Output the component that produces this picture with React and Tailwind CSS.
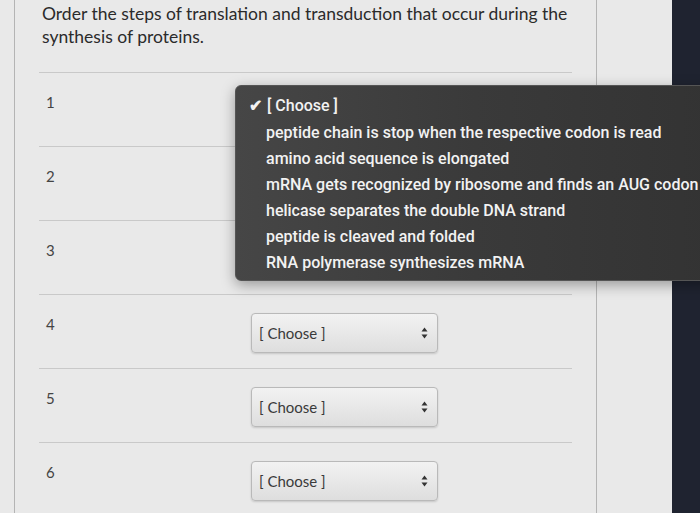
import { useState } from "react"

const options = [
  "peptide chain is stop when the respective codon is read",
  "amino acid sequence is elongated",
  "mRNA gets recognized by ribosome and finds an AUG codon",
  "helicase separates the double DNA strand",
  "peptide is cleaved and folded",
  "RNA polymerase synthesizes mRNA",
]

function Arrows() {
  return (
    <svg width="7" height="12" viewBox="0 0 7 12" className="text-[#333]">
      <path d="M3.5 0.5 L6.5 4.5 L0.5 4.5 Z" fill="currentColor" />
      <path d="M3.5 11.5 L6.5 7.5 L0.5 7.5 Z" fill="currentColor" />
    </svg>
  )
}

function Select() {
  return (
    <div className="w-[187px] h-[40px] rounded-[4px] border border-[#b9b9b9] bg-gradient-to-b from-[#f2f2f2] to-[#dedede] shadow-[0_1px_2px_rgba(0,0,0,0.15)] flex items-center justify-between pl-[7px] pr-[9px]">
      <span className="text-[15px] text-[#3a3a3a]">[ Choose ]</span>
      <Arrows />
    </div>
  )
}

function Row({ n, withSelect }) {
  return (
    <div className="h-[74px] border-t border-[#c9c9c9] flex">
      <div className="w-[212px] pl-[7px] pt-[18px] text-[15px] text-[#444]">{n}</div>
      {withSelect && (
        <div className="pt-[18px]">
          <Select />
        </div>
      )}
    </div>
  )
}

export default function App() {
  const [open] = useState(true)

  return (
    <div
      className="w-[700px] h-[513px] overflow-hidden bg-[#e9e9e9] flex relative"
      style={{ fontFamily: "Lato, 'Liberation Sans', sans-serif" }}
    >
      <div className="w-[672px] pl-[14px]">
        <div className="w-[583px] h-full border-l border-r border-[#b4b4b4]">
          <p className="pl-[27px] pr-[10px] pt-[2px] text-[17.5px] leading-[23px] text-[#2b2b2b]">
            Order the steps of translation and transduction that occur during the synthesis of proteins.
          </p>
          <div className="mt-[24px] pl-[24px] pr-[24px]">
            <Row n="1" />
            <Row n="2" />
            <Row n="3" />
            <Row n="4" withSelect />
            <Row n="5" withSelect />
            <Row n="6" withSelect />
          </div>
        </div>
      </div>
      <div className="flex-1 bg-[#1f2330]" />

      {open && (
        <div
          className="absolute left-[235px] top-[85px] w-[480px] h-[196px] rounded-[6px] bg-gradient-to-r from-[#464646] via-[#3a3a3a] to-[#333] shadow-[0_4px_14px_rgba(0,0,0,0.35)] border border-[#555] pt-[6px]"
          style={{ fontFamily: "Roboto, 'Liberation Sans', Arial, sans-serif" }}
        >
          <div className="flex items-center h-[28px] pl-[13px] text-[16px] font-medium text-[#f2f2f2]">
            <span className="w-[18px] text-[16px] font-bold">✔</span>
            <span>[ Choose ]</span>
          </div>
          {options.map((o) => (
            <div key={o} className="h-[26px] flex items-center pl-[30px] text-[16px] font-medium text-[#f2f2f2] whitespace-nowrap">
              {o}
            </div>
          ))}
        </div>
      )}
    </div>
  )
}
